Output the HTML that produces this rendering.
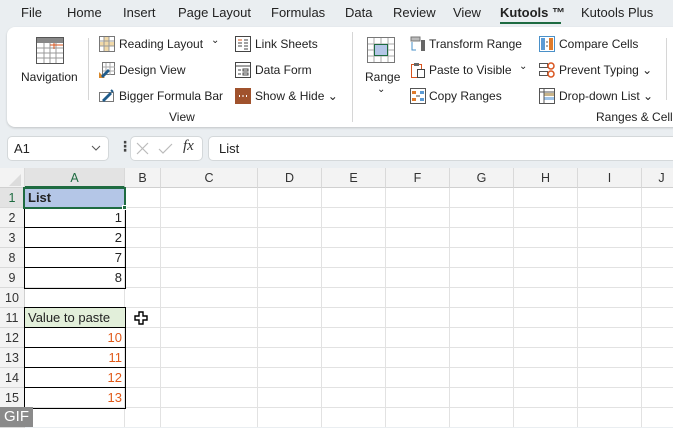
<!DOCTYPE html>
<html><head><meta charset="utf-8"><style>
*{margin:0;padding:0;box-sizing:border-box}
body{width:673px;height:427px;overflow:hidden;background:#eaeef1;font-family:"Liberation Sans","DejaVu Sans",sans-serif;color:#222;position:relative}
.a{position:absolute;white-space:nowrap}
.tab{position:absolute;top:5px;font-size:13px;color:#222}
.rb{position:absolute;left:7px;top:27px;width:700px;height:100px;background:#fff;border-radius:8px;box-shadow:0 1px 2px rgba(0,0,0,.18)}
.it{position:absolute;font-size:12px;color:#222;white-space:nowrap}
.ic{position:absolute;width:16px;height:16px}
.sep{position:absolute;width:1px;background:#d6d6d6}
.box{position:absolute;background:#fff;border:1px solid #d4d8da;border-radius:5px}
.grid{position:absolute;left:0;top:168px;width:673px;height:259px;background:#fff}
.ch{position:absolute;top:0;height:20px;background:#f3f3f3;border-right:1px solid #d9d9d9;border-bottom:1px solid #d0d0d0;text-align:center;font-size:12.5px;line-height:20px;color:#333}
.rh{position:absolute;left:0;width:25px;height:20px;background:#f3f3f3;border-bottom:1px solid #d9d9d9;border-right:1px solid #d0d0d0;text-align:center;font-size:12.5px;line-height:20px;color:#333}
.vl{position:absolute;top:20px;width:1px;height:239px;background:#e2e2e2}
.hl{position:absolute;left:25px;width:648px;height:1px;background:#e2e2e2}
.c{position:absolute;left:25px;width:100px;height:20px;font-size:13px;line-height:20px;padding:0 3px}
</style></head><body>
<div class="tab" style="left:21px">File</div>
<div class="tab" style="left:67px">Home</div>
<div class="tab" style="left:123px">Insert</div>
<div class="tab" style="left:178px">Page Layout</div>
<div class="tab" style="left:271px">Formulas</div>
<div class="tab" style="left:345px">Data</div>
<div class="tab" style="left:393px">Review</div>
<div class="tab" style="left:453px">View</div>
<div class="tab" style="left:500px;font-weight:bold">Kutools ™</div>
<div class="a" style="left:500px;top:22px;width:61px;height:2px;background:#1e6b41"></div>
<div class="tab" style="left:581px">Kutools Plus</div>

<div class="rb"></div>
<!-- Navigation -->
<svg class="a" style="left:36px;top:37px" width="28" height="27"><rect x=".5" y=".5" width="27" height="26" fill="#fff" stroke="#555"/><rect x="1" y="1" width="26" height="5" fill="#888"/><path d="M8 6v20M1 11h26M1 16h26M1 21h26M14 6v20M20 6v20" stroke="#999"/><path d="M14 8h13M18 6v6" stroke="#d9541e"/></svg>
<div class="it" style="left:21px;top:70px">Navigation</div>
<div class="sep" style="left:88px;top:38px;height:62px"></div>
<svg class="ic" style="left:99px;top:36px"><rect x=".5" y=".5" width="15" height="15" fill="#fff" stroke="#777"/><rect x="5" y="1" width="5" height="14" fill="#f1d9a8"/><rect x="1" y="6" width="14" height="4" fill="#f1d9a8"/><path d="M5 1v14M10 1v14M1 5h14M1 10h14" stroke="#999"/></svg>
<div class="it" style="left:119px;top:37px">Reading Layout</div>
<div class="it" style="left:211px;top:35px;font-size:10px">⌄</div>
<svg class="ic" style="left:99px;top:62px"><rect x="3.5" y=".5" width="12" height="12" fill="#fff" stroke="#777"/><path d="M7 1v12M11 1v12M4 5h12M4 9h12" stroke="#aaa"/><path d="M0 16l0-6 6 6z" fill="#d9882a"/><path d="M2 14l7-7 2 2-7 7z" fill="#1f5b8a"/></svg>
<div class="it" style="left:119px;top:63px">Design View</div>
<svg class="ic" style="left:99px;top:88px"><rect x=".5" y="4.5" width="14" height="9" fill="#fff" stroke="#777"/><path d="M3 12l8-8 2 2-8 8z" fill="#1f5b8a"/><path d="M12 2l2 2" stroke="#1f5b8a" stroke-width="2"/></svg>
<div class="it" style="left:119px;top:89px">Bigger Formula Bar</div>
<svg class="ic" style="left:235px;top:36px"><rect x=".5" y=".5" width="15" height="15" fill="#fff" stroke="#444"/><path d="M3 4h4M3 7h4M3 10h4M9 4h4M9 7h4M9 10h4M9 13h4" stroke="#444"/><path d="M3 4h4" stroke="#d9541e"/></svg>
<div class="it" style="left:255px;top:37px">Link Sheets</div>
<svg class="ic" style="left:235px;top:62px"><rect x=".5" y=".5" width="15" height="15" fill="#fff" stroke="#444"/><path d="M1 4h14M3 8h3M3 12h3M8 7h5v2H8zM8 11h5v2H8z" stroke="#444" fill="none"/></svg>
<div class="it" style="left:255px;top:63px">Data Form</div>
<svg class="ic" style="left:235px;top:88px"><rect width="16" height="16" fill="#a0522d"/><path d="M4 8h1M7.5 8h1M11 8h1" stroke="#fff" stroke-width="2"/></svg>
<div class="it" style="left:255px;top:89px">Show &amp; Hide ⌄</div>
<div class="it" style="left:169px;top:110px">View</div>
<div class="sep" style="left:352px;top:32px;height:90px"></div>
<!-- Range -->
<svg class="a" style="left:367px;top:37px" width="28" height="26"><rect x=".5" y=".5" width="27" height="25" fill="#fff" stroke="#777"/><path d="M1 7h26M1 13h26M1 19h26M7 1v24M14 1v24M21 1v24" stroke="#aaa"/><rect x="7.5" y="7.5" width="13" height="11" fill="#b4c6e7" stroke="#1e6b41"/></svg>
<div class="it" style="left:365px;top:70px">Range</div>
<div class="it" style="left:377px;top:84px;font-size:10px">⌄</div>
<svg class="ic" style="left:410px;top:36px"><rect x="1" y="1" width="9" height="4" fill="#bbb" stroke="#777"/><path d="M2 6v8h4M12 6v8" stroke="#4a90c8" fill="none"/><rect x="11" y="4" width="4" height="11" fill="#666"/></svg>
<div class="it" style="left:429px;top:37px">Transform Range</div>
<svg class="ic" style="left:410px;top:62px"><path d="M1.5 2.5h10v13h-10z" fill="#fff" stroke="#d9541e"/><rect x="4" y="1" width="5" height="3" fill="#666"/><rect x="7.5" y="7.5" width="7" height="8" fill="#fff" stroke="#444"/></svg>
<div class="it" style="left:429px;top:63px">Paste to Visible</div>
<div class="it" style="left:519px;top:61px;font-size:10px">⌄</div>
<svg class="ic" style="left:410px;top:88px"><rect x=".5" y=".5" width="15" height="15" fill="#fff" stroke="#555"/><rect x="2" y="3" width="4" height="3" fill="#e07b2a"/><rect x="2" y="10" width="4" height="3" fill="#e07b2a"/><rect x="10" y="3" width="4" height="3" fill="#5b9bd5"/><rect x="10" y="10" width="4" height="3" fill="#5b9bd5"/><path d="M6 8h4" stroke="#444"/></svg>
<div class="it" style="left:429px;top:89px">Copy Ranges</div>
<svg class="ic" style="left:539px;top:36px"><rect x=".5" y=".5" width="15" height="15" fill="#fff" stroke="#4a90c8"/><rect x="2" y="2" width="4" height="12" fill="#5b9bd5"/><rect x="10" y="2" width="4" height="12" fill="#e07b2a"/><path d="M8 5v2M8 9v2" stroke="#555"/></svg>
<div class="it" style="left:559px;top:37px">Compare Cells</div>
<svg class="ic" style="left:539px;top:62px"><rect x=".5" y="1.5" width="8" height="4" fill="#fff" stroke="#555"/><rect x=".5" y="9.5" width="8" height="4" fill="#fff" stroke="#555"/><circle cx="12" cy="4" r="3" fill="none" stroke="#d9541e" stroke-width="1.5"/><circle cx="12" cy="12" r="3" fill="none" stroke="#d9541e" stroke-width="1.5"/></svg>
<div class="it" style="left:559px;top:63px">Prevent Typing ⌄</div>
<svg class="ic" style="left:539px;top:88px"><rect x=".5" y=".5" width="15" height="15" fill="#fff" stroke="#555"/><rect x="5" y="5" width="10" height="3" fill="#c8b48a"/><rect x="5" y="9" width="10" height="3" fill="#9fc3e7"/><path d="M1 4h14M5 1v14" stroke="#555"/></svg>
<div class="it" style="left:559px;top:89px">Drop-down List ⌄</div>
<div class="sep" style="left:666px;top:38px;height:62px"></div>
<div class="it" style="left:596px;top:110px">Ranges &amp; Cells</div>

<!-- formula bar -->
<div class="box" style="left:7px;top:136px;width:102px;height:25px"></div>
<div class="a" style="left:14px;top:141px;font-size:13px">A1</div>
<svg class="a" style="left:91px;top:145px" width="10" height="7"><path d="M1 1l4 4 4-4" stroke="#555" fill="none"/></svg>
<div class="a" style="left:118px;top:138px;font-size:14px;font-weight:bold;color:#444">⋮</div>
<div class="box" style="left:130px;top:136px;width:73px;height:25px"></div>
<svg class="a" style="left:135px;top:141px" width="65" height="15"><path d="M2 2l11 11M13 2L2 13" stroke="#bbb" stroke-width="1.2"/><path d="M24 8l4 4 9-9" stroke="#bbb" stroke-width="1.2" fill="none"/></svg>
<div class="a" style="left:183px;top:138px;font-family:'Liberation Serif',serif;font-style:italic;font-size:15px;color:#333">fx</div>
<div class="box" style="left:208px;top:136px;width:475px;height:25px"></div>
<div class="a" style="left:219px;top:141px;font-size:13px">List</div>

<!-- grid -->
<div class="grid">
<div class="ch" style="left:0;width:25px"><svg width="24" height="20"><path d="M21 6v12H9z" fill="#dcdcdc"/></svg></div>
<div class="ch" style="left:25px;width:100px;color:#1e6b41;background:#e3e3e3;border-bottom:2px solid #1e6b41">A</div>
<div class="ch" style="left:125px;width:36px">B</div>
<div class="ch" style="left:161px;width:97px">C</div>
<div class="ch" style="left:258px;width:64px">D</div>
<div class="ch" style="left:322px;width:64px">E</div>
<div class="ch" style="left:386px;width:64px">F</div>
<div class="ch" style="left:450px;width:64px">G</div>
<div class="ch" style="left:514px;width:64px">H</div>
<div class="ch" style="left:578px;width:64px">I</div>
<div class="ch" style="left:642px;width:40px">J</div>
<div class="vl" style="left:160px"></div><div class="vl" style="left:257px"></div><div class="vl" style="left:321px"></div><div class="vl" style="left:385px"></div><div class="vl" style="left:449px"></div><div class="vl" style="left:513px"></div><div class="vl" style="left:577px"></div><div class="vl" style="left:641px"></div><div class="vl" style="left:124px"></div>
<div class="hl" style="top:39px"></div><div class="hl" style="top:59px"></div><div class="hl" style="top:79px"></div><div class="hl" style="top:99px"></div><div class="hl" style="top:119px"></div><div class="hl" style="top:139px"></div><div class="hl" style="top:159px"></div><div class="hl" style="top:179px"></div><div class="hl" style="top:199px"></div><div class="hl" style="top:219px"></div><div class="hl" style="top:239px"></div>
<div class="rh" style="top:20px;color:#1e6b41;background:#e3e3e3">1</div>
<div class="rh" style="top:40px">2</div><div class="rh" style="top:60px">3</div><div class="rh" style="top:80px">8</div><div class="rh" style="top:100px">9</div><div class="rh" style="top:120px">10</div><div class="rh" style="top:140px">11</div><div class="rh" style="top:160px">12</div><div class="rh" style="top:180px">13</div><div class="rh" style="top:200px">14</div><div class="rh" style="top:220px">15</div><div class="rh" style="top:240px"></div>
<div class="c" style="top:20px;background:#b4c6e7;font-weight:bold">List</div>
<div style="position:absolute;left:24px;top:40px;width:102px;height:81px;border:1px solid #000;border-top:none"></div>
<div class="hl" style="top:59px;left:25px;width:100px;background:#000"></div><div class="hl" style="top:79px;left:25px;width:100px;background:#000"></div><div class="hl" style="top:99px;left:25px;width:100px;background:#000"></div>
<div class="c" style="top:40px;text-align:right">1</div><div class="c" style="top:60px;text-align:right">2</div><div class="c" style="top:80px;text-align:right">7</div><div class="c" style="top:100px;text-align:right">8</div>
<div style="position:absolute;left:24px;top:139px;width:102px;height:102px;border:1px solid #000"></div>
<div class="c" style="top:140px;background:#e2efda">Value to paste</div>
<div class="hl" style="top:159px;left:25px;width:100px;background:#000"></div><div class="hl" style="top:179px;left:25px;width:100px;background:#000"></div><div class="hl" style="top:199px;left:25px;width:100px;background:#000"></div><div class="hl" style="top:219px;left:25px;width:100px;background:#000"></div>
<div class="c" style="top:160px;text-align:right;color:#e05a1a">10</div><div class="c" style="top:180px;text-align:right;color:#e05a1a">11</div><div class="c" style="top:200px;text-align:right;color:#e05a1a">12</div><div class="c" style="top:220px;text-align:right;color:#e05a1a">13</div>
<div style="position:absolute;left:23px;top:19px;width:103px;height:22px;border:2px solid #1e6b41"></div>
<div style="position:absolute;left:122px;top:37px;width:5px;height:5px;background:#1e6b41;border:1px solid #fff"></div>
<svg style="position:absolute;left:134px;top:143px" width="15" height="15"><path d="M5 1h4v4h4v4H9v4H5V9H1V5h4z" fill="#fff" stroke="#000" stroke-width="1.4"/></svg>
</div>
<div class="a" style="left:0;top:407px;width:33px;height:20px;background:#8a8a8a;color:#fff;font-size:15px;line-height:20px;text-align:center">GIF</div>
</body></html>
